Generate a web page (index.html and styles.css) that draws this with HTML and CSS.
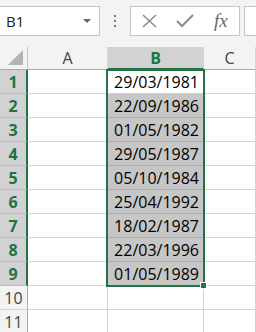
FILE: index.html
```html
<!DOCTYPE html>
<html lang="en">
<head>
    <meta charset="UTF-8">
    <title>Sheet</title>
    <link rel="stylesheet" href="styles.css">
</head>
<body>
    <div class="formula-bar">
        <div class="name-box">
            <span>B1</span>
            <span class="drop"></span>
        </div>
        <div class="dots"><i></i><i></i><i></i></div>
        <div class="buttons">
            <svg width="16" height="14" viewBox="0 0 16 14"><path d="M1 1 L14 13 M14 1 L1 13" stroke="#8c8c8c" stroke-width="1.6" fill="none"/></svg>
            <svg width="18" height="14" viewBox="0 0 18 14"><path d="M1 7 L6 12 L17 1" stroke="#8c8c8c" stroke-width="2" fill="none"/></svg>
            <span class="fx">fx</span>
        </div>
        <div class="formula-input"></div>
    </div>

    <div class="sheet">
        <div class="corner"><span class="tri"></span></div>
        <div class="col-head">A</div>
        <div class="col-head sel">B</div>
        <div class="col-head">C</div>

        <div class="row-head sel">1</div><div class="cell"></div><div class="cell active">29/03/1981</div><div class="cell"></div>
        <div class="row-head sel">2</div><div class="cell"></div><div class="cell hl">22/09/1986</div><div class="cell"></div>
        <div class="row-head sel">3</div><div class="cell"></div><div class="cell hl">01/05/1982</div><div class="cell"></div>
        <div class="row-head sel">4</div><div class="cell"></div><div class="cell hl">29/05/1987</div><div class="cell"></div>
        <div class="row-head sel">5</div><div class="cell"></div><div class="cell hl">05/10/1984</div><div class="cell"></div>
        <div class="row-head sel">6</div><div class="cell"></div><div class="cell hl">25/04/1992</div><div class="cell"></div>
        <div class="row-head sel">7</div><div class="cell"></div><div class="cell hl">18/02/1987</div><div class="cell"></div>
        <div class="row-head sel">8</div><div class="cell"></div><div class="cell hl">22/03/1996</div><div class="cell"></div>
        <div class="row-head sel">9</div><div class="cell"></div><div class="cell hl">01/05/1989</div><div class="cell"></div>
        <div class="row-head">10</div><div class="cell"></div><div class="cell"></div><div class="cell"></div>
        <div class="row-head">11</div><div class="cell"></div><div class="cell"></div><div class="cell"></div>

        <div class="selection"><span class="handle"></span></div>
    </div>
</body>
</html>
```

FILE: styles.css
```css
body { margin: 0; background: #f3f3f3; font-family: "Open Sans", "Noto Sans", sans-serif; overflow: hidden; }

.formula-bar { height: 47px; display: flex; align-items: flex-start; padding-top: 6px; box-sizing: border-box; }
.name-box { width: 101px; height: 30px; margin-left: -1px; box-sizing: border-box; border: 1px solid #c6c6c6; background: #fff; display: flex; align-items: center; justify-content: space-between; padding: 0 8px 0 6px; font-size: 15px; color: #222; }
.drop { width: 0; height: 0; border-left: 4px solid transparent; border-right: 4px solid transparent; border-top: 4px solid #666; }
.dots { width: 30px; display: flex; flex-direction: column; align-items: center; gap: 3px; padding-top: 9px; }
.dots i { width: 2px; height: 2px; background: #777; display: block; }
.buttons { width: 110px; height: 30px; box-sizing: border-box; border: 1px solid #c6c6c6; background: #fff; display: flex; align-items: center; gap: 18px; padding-left: 11px; }
.fx { font-family: "Liberation Serif", serif; font-style: italic; font-size: 19px; color: #6a6a6a; margin-left: 2px; }
.formula-input { flex: 1; height: 30px; margin-left: 4px; box-sizing: border-box; border: 1px solid #c6c6c6; border-right: none; background: #fff; }

.sheet { display: grid; grid-template-columns: 28px 80px 96px 1fr; grid-template-rows: 23px repeat(11, 24px); background: #fff; position: relative; }
.sheet > div { box-sizing: border-box; }

.corner { background: #f3f3f3; border-right: 1px solid #c6c6c6; border-bottom: 1px solid #ababab; position: relative; }
.tri { position: absolute; right: 4px; bottom: 4px; width: 0; height: 0; border-left: 15px solid transparent; border-bottom: 15px solid #b4b4b4; }

.col-head { background: #f3f3f3; border-right: 1px solid #d4d4d4; border-bottom: 1px solid #ababab; display: flex; align-items: center; justify-content: center; font-size: 16px; color: #444; }
.col-head.sel { background: #d2d2d2; color: #217346; font-weight: bold; border-bottom: 2px solid #217346; }

.row-head { background: #f3f3f3; border-right: 1px solid #ababab; border-bottom: 1px solid #d4d4d4; display: flex; align-items: center; justify-content: center; font-size: 16px; color: #444; }
.row-head.sel { background: #d2d2d2; color: #217346; font-weight: bold; border-right: 2px solid #217346; border-bottom-color: #bdbdbd; }

.cell { border-right: 1px solid #d4d4d4; border-bottom: 1px solid #d4d4d4; display: flex; align-items: center; justify-content: flex-end; padding-right: 4px; font-size: 16px; color: #000; }
.cell.hl { background: #c6c6c6; border-right-color: #b0b0b0; border-bottom-color: #b0b0b0; }

.selection { position: absolute; grid-column: 3 / 4; grid-row: 2 / 11; top: -1px; right: -1px; bottom: -1px; left: -2px; border: 2px solid #217346; pointer-events: none; }
.handle { position: absolute; right: -4px; bottom: -4px; width: 5px; height: 5px; background: #217346; border: 1px solid #fff; }
```
